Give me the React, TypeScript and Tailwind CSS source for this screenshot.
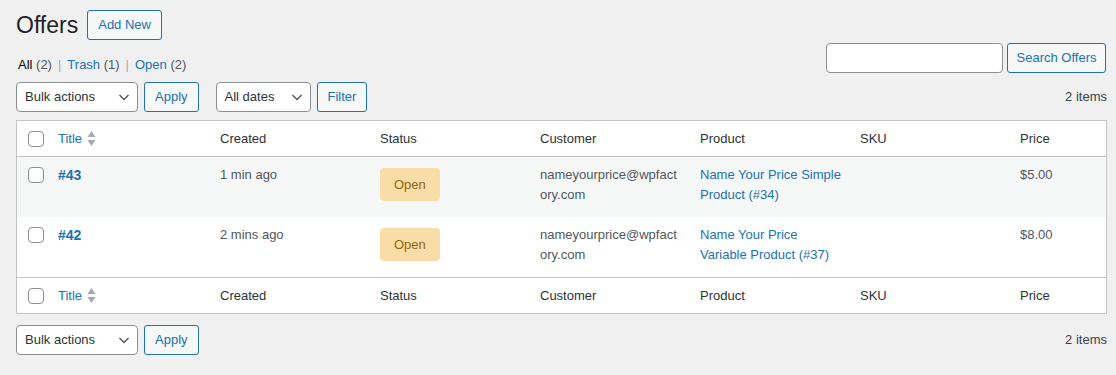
import React from 'react';

const rows = [
  {
    id: '#43',
    created: '1 min ago',
    email: ['nameyourprice@wpfact', 'ory.com'],
    product: ['Name Your Price Simple', 'Product (#34)'],
    price: '$5.00',
    striped: true,
  },
  {
    id: '#42',
    created: '2 mins ago',
    email: ['nameyourprice@wpfact', 'ory.com'],
    product: ['Name Your Price', 'Variable Product (#37)'],
    price: '$8.00',
    striped: false,
  },
];

const cols = 'grid grid-cols-[31px_162px_160px_160px_160px_160px_160px_1fr]';

function Chevron() {
  return (
    <svg width="12" height="12" viewBox="0 0 12 12" className="shrink-0">
      <path d="M1.5 4 L6 8.5 L10.5 4" fill="none" stroke="#50575e" strokeWidth="1.4" />
    </svg>
  );
}

function Select({ label, width }: { label: string; width: string }) {
  return (
    <div
      className={`flex h-[30px] items-center justify-between rounded-[4px] border border-[#8c8f94] bg-white pl-[8px] pr-[7px] text-[#2c3338] ${width}`}
    >
      <span>{label}</span>
      <Chevron />
    </div>
  );
}

function Button({ label, className = '' }: { label: string; className?: string }) {
  return (
    <button
      className={`flex h-[30px] items-center justify-center whitespace-nowrap rounded-[3px] border border-[#2271b1] bg-[#f6f7f7] px-[10px] text-[#2271b1] ${className}`}
    >
      {label}
    </button>
  );
}

function Checkbox() {
  return <div className="h-4 w-4 rounded-[4px] border border-[#8c8f94] bg-white" />;
}

function SortIcon() {
  return (
    <svg width="9" height="17" viewBox="0 0 9 17" className="ml-[5px]">
      <path d="M4.5 1 L8.5 7 L0.5 7 Z" fill="#a7aaad" />
      <path d="M4.5 16 L8.5 10 L0.5 10 Z" fill="#a7aaad" />
    </svg>
  );
}

function HeaderRow({ border }: { border: 'top' | 'bottom' }) {
  return (
    <div
      className={`${cols} h-[36px] items-center text-[#2c3338] ${
        border === 'bottom' ? 'border-b border-[#c3c4c7]' : 'border-t border-[#c3c4c7]'
      }`}
    >
      <div className="flex justify-end pr-[4px]">
        <Checkbox />
      </div>
      <div className="flex items-center px-[10px] text-[#2271b1]">
        Title
        <SortIcon />
      </div>
      <div className="px-[10px]">Created</div>
      <div className="px-[10px]">Status</div>
      <div className="px-[10px]">Customer</div>
      <div className="px-[10px]">Product</div>
      <div className="px-[10px]">SKU</div>
      <div className="px-[10px]">Price</div>
    </div>
  );
}

function Tablenav({ filters }: { filters?: boolean }) {
  return (
    <div className="flex h-[30px] items-center justify-between">
      <div className="flex items-center">
        <Select label="Bulk actions" width="w-[122px]" />
        <Button label="Apply" className="ml-[6px]" />
        {filters && (
          <>
            <Select label="All dates" width="w-[95px] ml-[17px]" />
            <Button label="Filter" className="ml-[6px]" />
          </>
        )}
      </div>
      <span className="text-[#3c434a]">2 items</span>
    </div>
  );
}

export default function App() {
  return (
    <div className="min-h-screen bg-[#f0f0f1] pl-4 pr-[9px] pt-[9px] font-['Liberation_Sans',Arial,sans-serif] text-[13px] leading-[20px] text-[#3c434a]">
      <div className="flex h-[31px] items-center">
        <h1 className="text-[23px] font-normal leading-[30px] text-[#1d2327]">Offers</h1>
        <Button label="Add New" className="ml-[9px]" />
      </div>

      <div className="mt-[3px] flex items-end justify-between">
        <div className="mb-[-2px] pl-[2px] text-[#50575e]">
          <span className="text-black">All</span> (2)
          <span className="mx-[6px] text-[#a7aaad]">|</span>
          <span className="text-[#2271b1]">Trash</span> (1)
          <span className="mx-[6px] text-[#a7aaad]">|</span>
          <span className="text-[#2271b1]">Open</span> (2)
        </div>
        <div className="flex items-center pr-[1px]">
          <div className="h-[30px] w-[177px] rounded-[4px] border border-[#8c8f94] bg-white" />
          <Button label="Search Offers" className="ml-[4px] w-[99px] px-0" />
        </div>
      </div>

      <div className="mt-[9px]">
        <Tablenav filters />
      </div>

      <div className="mt-[8px] border border-[#c3c4c7] bg-white">
        <HeaderRow border="bottom" />
        {rows.map((r) => (
          <div
            key={r.id}
            className={`${cols} h-[60px] items-start ${r.striped ? 'bg-[#f6f7f7]' : 'bg-white'}`}
          >
            <div className="flex justify-end pr-[4px] pt-[10px]">
              <Checkbox />
            </div>
            <div className="px-[10px] pt-[8px] text-[14px] font-semibold text-[#2271b1]">
              {r.id}
            </div>
            <div className="px-[10px] pt-[8px] text-[#50575e]">{r.created}</div>
            <div className="px-[10px] pt-[11px]">
              <span className="inline-block h-[33px] rounded-[4px] bg-[#f8dda7] px-[14px] leading-[33px] text-[#94660c]">
                Open
              </span>
            </div>
            <div className="whitespace-nowrap px-[10px] pt-[8px] text-[#50575e]">
              {r.email[0]}
              <br />
              {r.email[1]}
            </div>
            <div className="whitespace-nowrap px-[10px] pt-[8px] text-[#2271b1]">
              {r.product[0]}
              <br />
              {r.product[1]}
            </div>
            <div className="px-[10px] pt-[8px]" />
            <div className="px-[10px] pt-[8px] text-[#50575e]">{r.price}</div>
          </div>
        ))}
        <HeaderRow border="top" />
      </div>

      <div className="mt-[11px]">
        <Tablenav />
      </div>
    </div>
  );
}
